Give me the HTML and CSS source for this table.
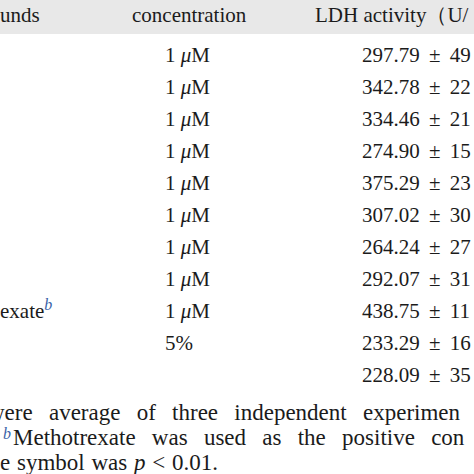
FILE: index.html
```html
<!DOCTYPE html>
<html>
<head>
<meta name="viewport" content="width=device-width, initial-scale=1">
<link rel="stylesheet" href="styles.css">
</head>
<body>
<div class="sheet">
  <div class="row head">
    <div class="cell name">unds</div>
    <div class="cell conc">concentration</div>
    <div class="cell ldh">LDH activity（U/</div>
  </div>

  <div class="body">
    <div class="row"><div class="cell name"></div><div class="cell conc">1 <i>μ</i>M</div><div class="cell ldh">297.79 <span class="pm">±</span> 49</div></div>
    <div class="row"><div class="cell name"></div><div class="cell conc">1 <i>μ</i>M</div><div class="cell ldh">342.78 <span class="pm">±</span> 22</div></div>
    <div class="row"><div class="cell name"></div><div class="cell conc">1 <i>μ</i>M</div><div class="cell ldh">334.46 <span class="pm">±</span> 21</div></div>
    <div class="row"><div class="cell name"></div><div class="cell conc">1 <i>μ</i>M</div><div class="cell ldh">274.90 <span class="pm">±</span> 15</div></div>
    <div class="row"><div class="cell name"></div><div class="cell conc">1 <i>μ</i>M</div><div class="cell ldh">375.29 <span class="pm">±</span> 23</div></div>
    <div class="row"><div class="cell name"></div><div class="cell conc">1 <i>μ</i>M</div><div class="cell ldh">307.02 <span class="pm">±</span> 30</div></div>
    <div class="row"><div class="cell name"></div><div class="cell conc">1 <i>μ</i>M</div><div class="cell ldh">264.24 <span class="pm">±</span> 27</div></div>
    <div class="row"><div class="cell name"></div><div class="cell conc">1 <i>μ</i>M</div><div class="cell ldh">292.07 <span class="pm">±</span> 31</div></div>
    <div class="row"><div class="cell name">exate<sup class="note">b</sup></div><div class="cell conc">1 <i>μ</i>M</div><div class="cell ldh">438.75 <span class="pm">±</span> 11</div></div>
    <div class="row"><div class="cell name"></div><div class="cell conc">5%</div><div class="cell ldh">233.29 <span class="pm">±</span> 16</div></div>
    <div class="row"><div class="cell name"></div><div class="cell conc"></div><div class="cell ldh">228.09 <span class="pm">±</span> 35</div></div>
  </div>

  <div class="notes">
    <p class="line first">were average of three independent experimen</p>
    <p class="line second"><sup class="note">b</sup>Methotrexate was used as the positive con</p>
    <p class="line third">e symbol was <i>p</i> &lt; 0.01.</p>
  </div>
</div>
</body>
</html>
```

FILE: styles.css
```css
body {
  margin: 0;
  background: #ffffff;
  color: #1b1b1b;
  font-family: "Liberation Serif", "DejaVu Serif", serif;
  font-size: 21px;
  overflow: hidden;
}

.sheet {
  width: 474px;
  height: 474px;
  overflow: hidden;
}

/* table rows share one column grid */
.row {
  display: grid;
  grid-template-columns: 132px 183px 1fr;
  height: 32px;
  line-height: 32px;
  white-space: nowrap;
}

.head {
  height: 34px;
  line-height: 30px;
  background: #e8e8e8;
}

.body {
  padding-top: 5px;
}

.body .conc {
  padding-left: 33px;
}

.body .ldh {
  padding-left: 47px;
}

.pm {
  margin: 0 4px;
}

.note {
  color: #3a63a8;
  font-style: italic;
  font-size: 16px;
  line-height: 0;
}

/* footnotes under the table */
.notes {
  margin-top: 9px;
  font-size: 23px;
}

.line {
  margin: 0;
  height: 25px;
  line-height: 25px;
  white-space: nowrap;
}

.first {
  text-indent: -12px;
  word-spacing: 10.5px;
}

.second {
  text-indent: 3px;
  word-spacing: 10.5px;
}

.second .note {
  vertical-align: 6px;
  margin-right: 2px;
}

.third {
  word-spacing: 1px;
}
```
